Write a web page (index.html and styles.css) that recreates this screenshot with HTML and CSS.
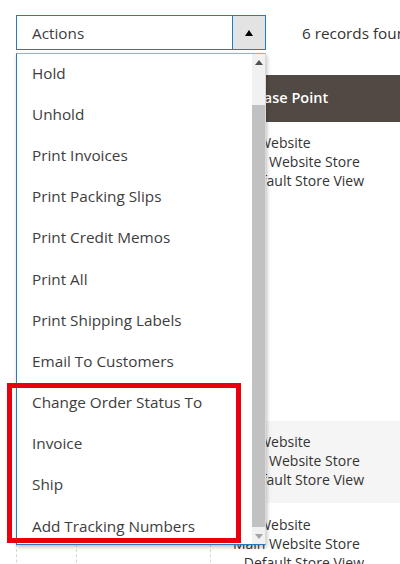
FILE: index.html
```html
<!DOCTYPE html>
<html>
<head>
<meta charset="utf-8">
<link rel="stylesheet" href="styles.css">
</head>
<body>
<div class="page">
  <div class="toolbar">
    <div class="select">
      <span class="select-label">Actions</span>
      <span class="select-btn"><svg width="10" height="8" viewBox="0 0 10 8"><path d="M1 7 L5 1 L9 7 Z" fill="#000"/></svg></span>
    </div>
    <span class="records">6 records found</span>
  </div>

  <div class="grid">
    <div class="head">
      <div class="col c1"></div>
      <div class="col c2"></div>
      <div class="col c3">Purchase Point</div>
    </div>
    <div class="row r1">
      <div class="col c1"></div>
      <div class="col c2"></div>
      <div class="col c3"><div>Main Website</div><div>&nbsp;&nbsp;&nbsp;Main Website Store</div><div>&nbsp;&nbsp;&nbsp;&nbsp;&nbsp;&nbsp;Default Store View</div></div>
    </div>
    <div class="row r2">
      <div class="col c1"></div>
      <div class="col c2"></div>
      <div class="col c3"><div>Main Website</div><div>&nbsp;&nbsp;&nbsp;Main Website Store</div><div>&nbsp;&nbsp;&nbsp;&nbsp;&nbsp;&nbsp;Default Store View</div></div>
    </div>
    <div class="row r3">
      <div class="col c1"></div>
      <div class="col c2"></div>
      <div class="col c3"><div>Main Website</div><div>&nbsp;&nbsp;&nbsp;Main Website Store</div><div>&nbsp;&nbsp;&nbsp;&nbsp;&nbsp;&nbsp;Default Store View</div></div>
    </div>
  </div>

  <div class="menu">
    <ul class="menu-list">
      <li>Hold</li>
      <li>Unhold</li>
      <li>Print Invoices</li>
      <li>Print Packing Slips</li>
      <li>Print Credit Memos</li>
      <li>Print All</li>
      <li>Print Shipping Labels</li>
      <li>Email To Customers</li>
      <li>Change Order Status To</li>
      <li>Invoice</li>
      <li>Ship</li>
      <li>Add Tracking Numbers</li>
    </ul>
    <div class="scrollbar">
      <div class="sb-arrow"><svg width="8" height="5" viewBox="0 0 8 5"><path d="M0 5 L4 0 L8 5 Z" fill="#505050"/></svg></div>
      <div class="sb-track"><div class="sb-thumb"></div></div>
      <div class="sb-arrow"><svg width="8" height="5" viewBox="0 0 8 5"><path d="M0 0 L4 5 L8 0 Z" fill="#a3a3a3"/></svg></div>
    </div>
  </div>

  <div class="highlight"></div>
</div>
</body>
</html>
```

FILE: styles.css
```css
* { box-sizing: border-box; }
html, body { margin: 0; padding: 0; }
body {
  width: 400px;
  height: 564px;
  overflow: hidden;
  background: #fff;
  font-family: "Open Sans", "Liberation Sans", sans-serif;
  color: #333;
}
.page {
  position: relative;
  width: 400px;
  height: 564px;
  padding-top: 15px;
  overflow: hidden;
}
.toolbar {
  display: flex;
  align-items: center;
  padding-left: 16px;
  white-space: nowrap;
}
.select {
  display: flex;
  width: 250px;
  height: 35px;
  border: 1px solid #2979bd;
  background: #fff;
  flex-shrink: 0;
}
.select-label {
  flex: 1;
  display: flex;
  align-items: center;
  padding-left: 15px;
  font-size: 15.3px;
  color: #3d3d3d;
}
.select-btn {
  width: 33px;
  display: flex;
  align-items: center;
  justify-content: center;
  background: #e3e3e3;
  border-left: 1px solid #2979bd;
}
.records {
  margin-left: 36px;
  font-size: 15.3px;
  color: #333;
}
.grid {
  margin-top: 25px;
  margin-left: 16px;
  width: 384px;
  overflow: hidden;
}
.head {
  display: flex;
  height: 47px;
  background: #514943;
  color: #fff;
  font-weight: 600;
  font-size: 14.5px;
}
.head .col { display: flex; align-items: center; padding-bottom: 3px; }
.row { display: flex; font-size: 14px; line-height: 19px; color: #333; }
.r1 { height: 299px; }
.r2 { height: 82px; background: #f5f5f5; }
.r3 { height: 80px; }
.col {
  border-left: 1px dashed #d6d6d6;
  flex-shrink: 0;
}
.head .col { border-left: none; }
.c1 { width: 60px; }
.c2 { width: 134px; }
.c3 { width: 226px; padding-left: 11px; white-space: nowrap; }
.r1 .c3 { padding-top: 11px; }
.r2 .c3 { padding-top: 11px; }
.r3 .c3 { padding-top: 12px; }
.head .c3 { padding-left: 13px; }

.menu {
  position: absolute;
  left: 16px;
  top: 53px;
  width: 250px;
  height: 492px;
  background: #fff;
  border: 1px solid #2979bd;
  border-top-color: #8bb6db;
  border-right-color: #d9d9d9;
  box-shadow: 1px 2px 4px rgba(0,0,0,0.25);
  display: flex;
  overflow: hidden;
}
.menu-list {
  list-style: none;
  margin: 0;
  padding: 0;
  flex: 1;
}
.menu-list li {
  height: 41.2px;
  display: flex;
  align-items: center;
  padding-left: 15px;
  padding-bottom: 4px;
  font-size: 15.3px;
  color: #3d3d3d;
  white-space: nowrap;
}
.scrollbar {
  width: 13px;
  background: #f1f1f1;
  display: flex;
  flex-direction: column;
}
.sb-arrow {
  height: 16px;
  display: flex;
  align-items: center;
  justify-content: center;
}
.sb-track {
  flex: 1;
  padding-top: 35px;
  padding-bottom: 1px;
  display: flex;
  flex-direction: column;
}
.sb-thumb {
  flex: 1;
  background: #c1c1c1;
}
.highlight {
  position: absolute;
  left: 7px;
  top: 383px;
  width: 234px;
  height: 160px;
  border: 5px solid #e8000d;
}
```
